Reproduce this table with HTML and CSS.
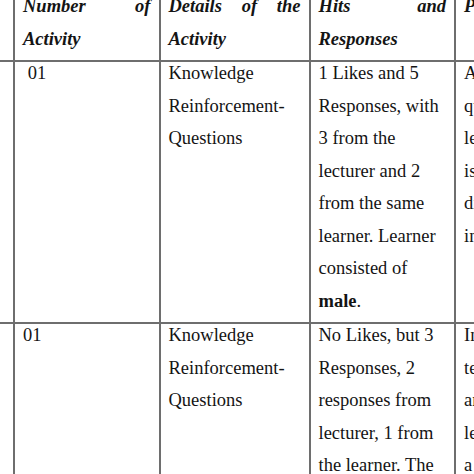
FILE: index.html
```html
<!DOCTYPE html>
<html lang="en">
<head>
<meta charset="utf-8">
<title>Activity table</title>
<link rel="stylesheet" href="styles.css">
</head>
<body>
<table class="grid">
  <colgroup>
    <col class="w0">
    <col class="w1">
    <col class="w2">
    <col class="w3">
    <col class="w4">
  </colgroup>
  <thead>
    <tr>
      <th class="edge"><div class="c"></div></th>
      <th><div class="c">Number of Activity</div></th>
      <th><div class="c">Details of the Activity</div></th>
      <th><div class="c">Hits and Responses</div></th>
      <th><div class="c">Pattern of Interaction</div></th>
    </tr>
  </thead>
  <tbody>
    <tr>
      <td class="edge"><div class="c"></div></td>
      <td><div class="c">&nbsp;01</div></td>
      <td><div class="c">Knowledge Reinforcement-Questions</div></td>
      <td><div class="c">1 Likes and 5 Responses, with 3 from the lecturer and 2 from the same learner. Learner consisted of <b>male</b>.</div></td>
      <td><div class="c">A lecturer posted a<br>question and the<br>learner replied. This<br>is a one-to-one<br>discussion with little<br>interaction.</div></td>
    </tr>
    <tr>
      <td class="edge"><div class="c"></div></td>
      <td><div class="c">01</div></td>
      <td><div class="c">Knowledge Reinforcement-Questions</div></td>
      <td><div class="c">No Likes, but 3 Responses, 2 responses from lecturer, 1 from the learner. The learner was a female.</div></td>
      <td><div class="c">Interaction between<br>teacher<br>and one<br>learner only, with<br>a short exchange.</div></td>
    </tr>
  </tbody>
</table>
</body>
</html>
```

FILE: styles.css
```css
html, body {
  margin: 0;
  padding: 0;
  background: #ffffff;
  overflow: hidden;
}

.grid {
  border-collapse: collapse;
  table-layout: fixed;
  width: 755px;
  margin-top: -5px;
  font-family: "Liberation Serif", "Times New Roman", serif;
  font-size: 18.5px;
  color: #141414;
}

.w0 { width: 14px; }
.w1 { width: 145.5px; }
.w2 { width: 150px; }
.w3 { width: 145.5px; }
.w4 { width: 300px; }

.grid th,
.grid td {
  border: 2px solid #6e6e6e;
  padding: 0 8px;
  vertical-align: top;
  text-align: left;
  font-weight: normal;
}

.grid thead th {
  border-top: none;
  font-weight: bold;
  font-style: italic;
  text-align: justify;
}

.grid .edge {
  border-left: none;
  padding: 0;
}

.c {
  line-height: 32.5px;
  margin-top: -5px;
  margin-bottom: 5px;
}

.grid b {
  font-weight: bold;
}
```
